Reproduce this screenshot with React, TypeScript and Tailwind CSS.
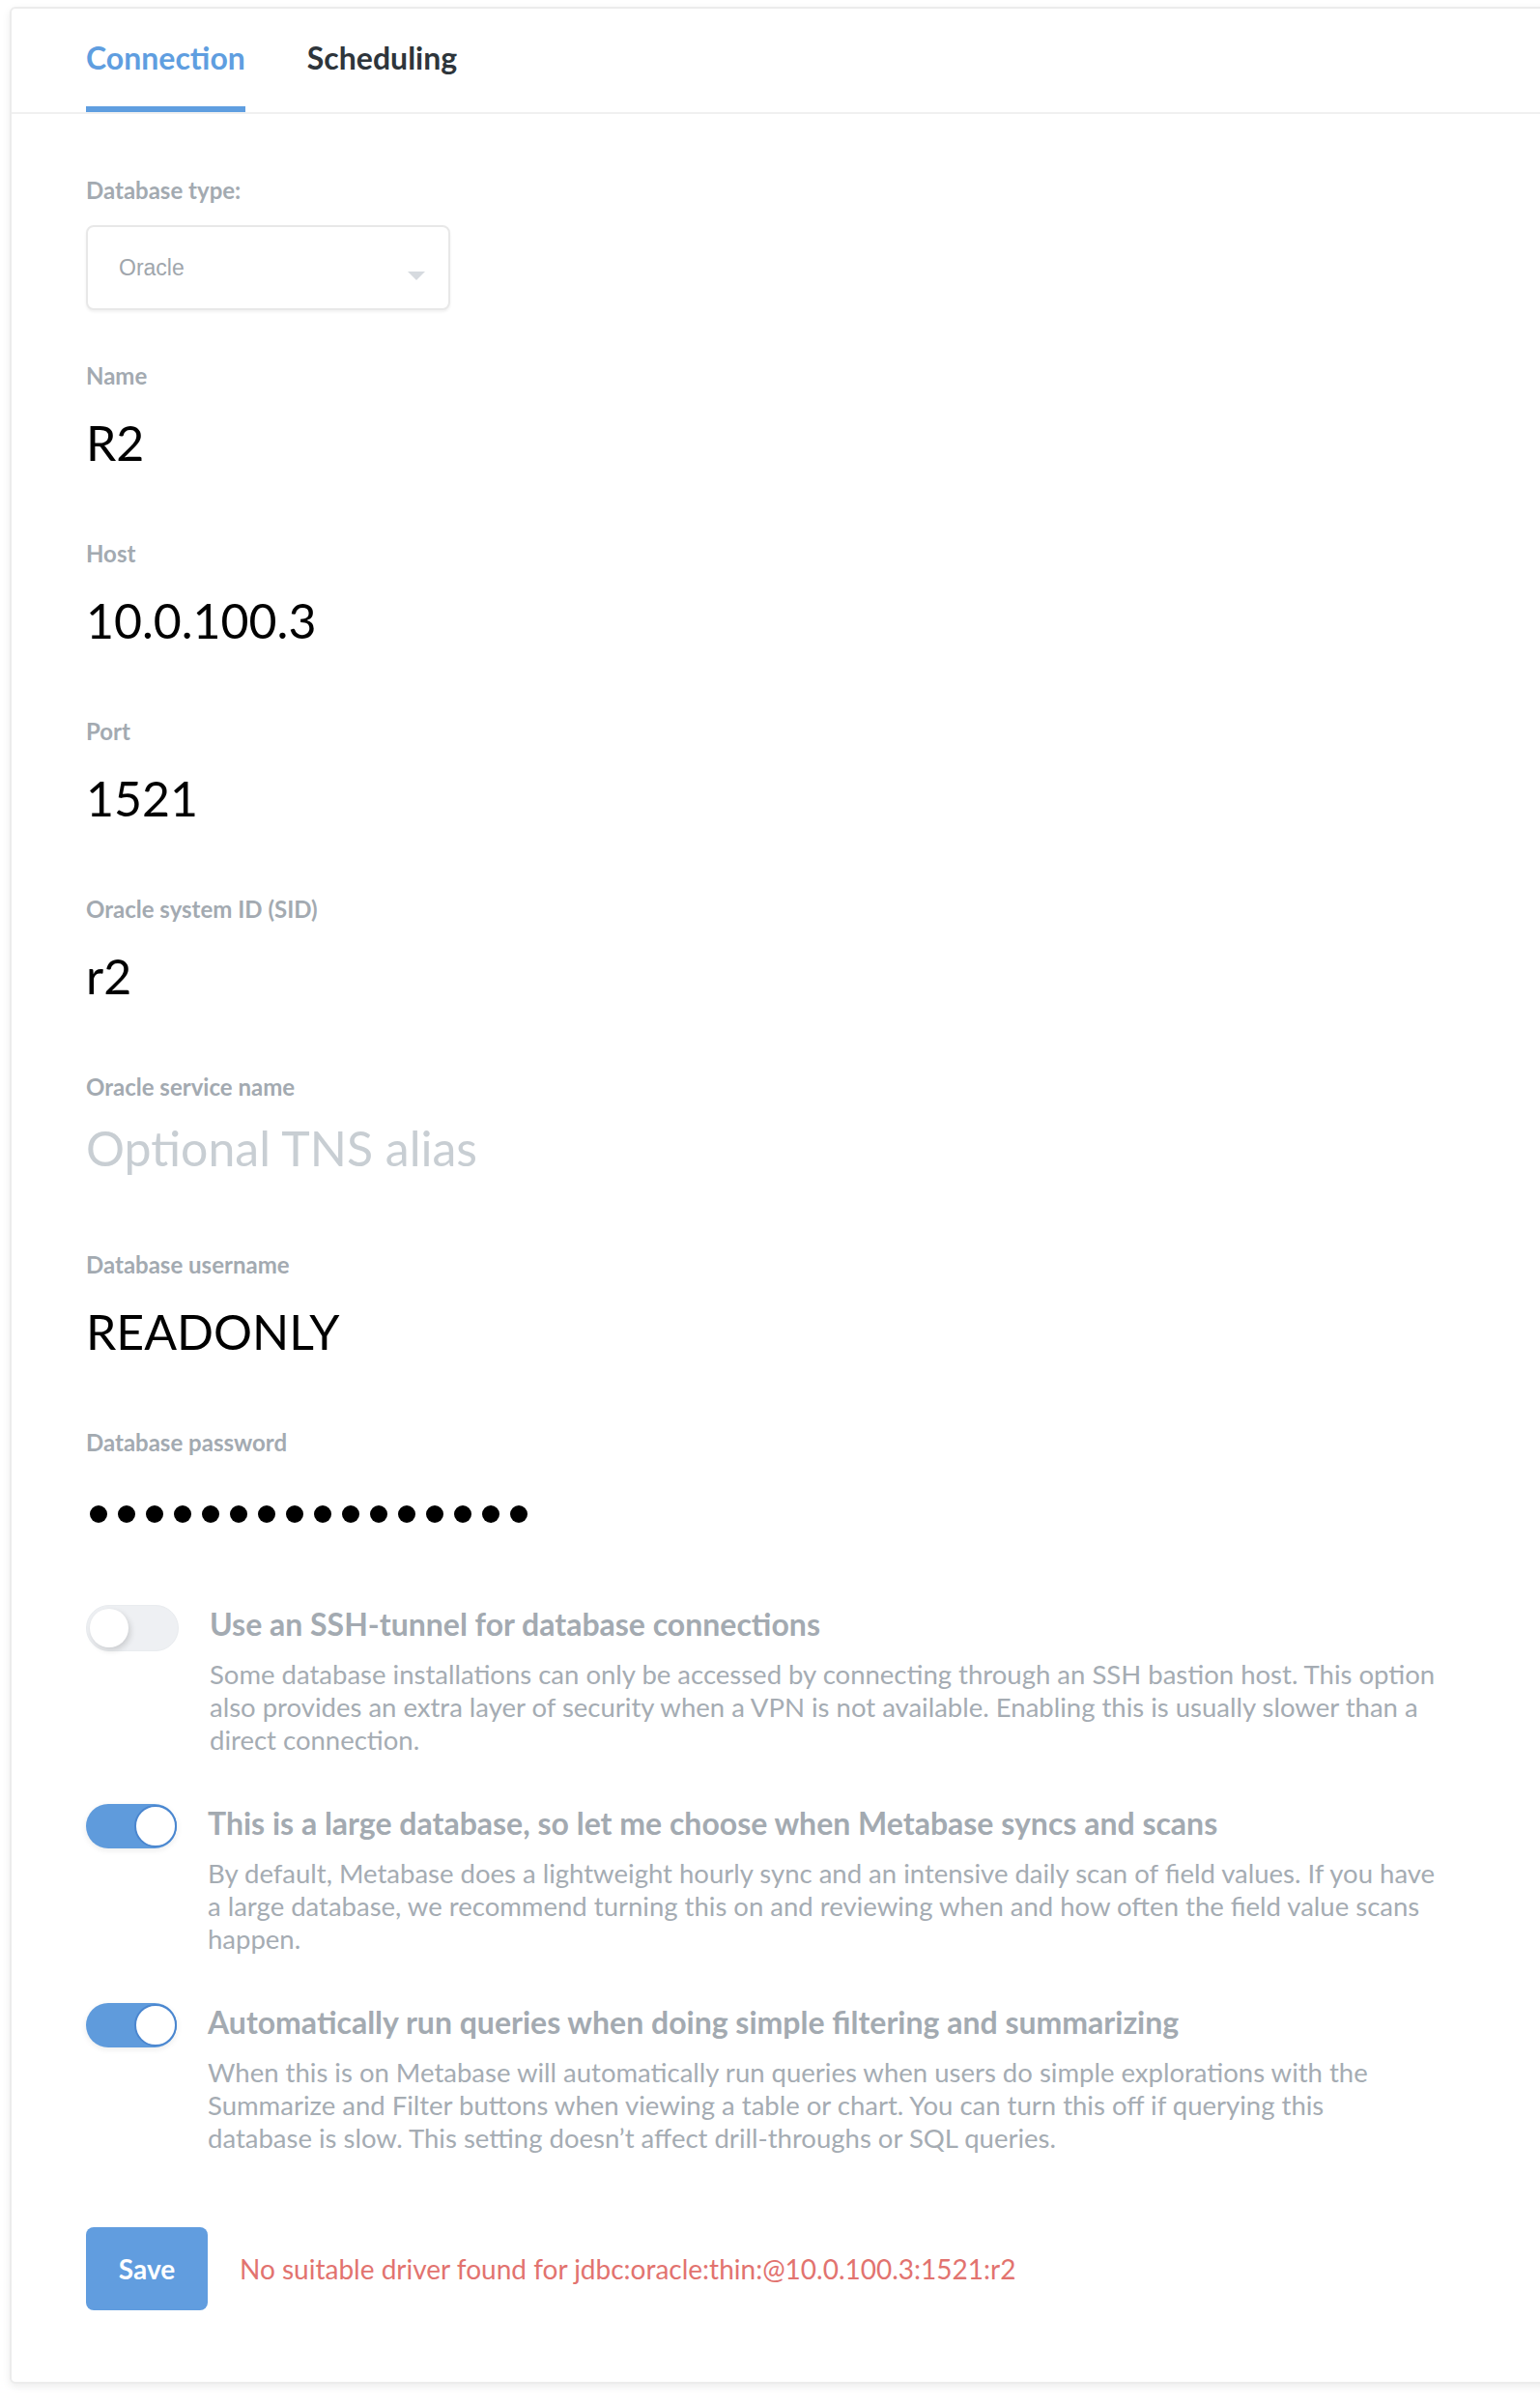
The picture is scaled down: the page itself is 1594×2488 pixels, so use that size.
import React from "react";

const fields: { label: string; value: string; placeholder?: boolean }[] = [
  { label: "Name", value: "R2" },
  { label: "Host", value: "10.0.100.3" },
  { label: "Port", value: "1521" },
  { label: "Oracle system ID (SID)", value: "r2" },
  { label: "Oracle service name", value: "Optional TNS alias", placeholder: true },
  { label: "Database username", value: "READONLY" },
];

const toggles = [
  {
    on: false,
    title: "Use an SSH-tunnel for database connections",
    lines: [
      "Some database installations can only be accessed by connecting through an SSH bastion host. This option",
      "also provides an extra layer of security when a VPN is not available. Enabling this is usually slower than a",
      "direct connection.",
    ],
  },
  {
    on: true,
    title: "This is a large database, so let me choose when Metabase syncs and scans",
    lines: [
      "By default, Metabase does a lightweight hourly sync and an intensive daily scan of field values. If you have",
      "a large database, we recommend turning this on and reviewing when and how often the field value scans",
      "happen.",
    ],
  },
  {
    on: true,
    title: "Automatically run queries when doing simple filtering and summarizing",
    lines: [
      "When this is on Metabase will automatically run queries when users do simple explorations with the",
      "Summarize and Filter buttons when viewing a table or chart. You can turn this off if querying this",
      "database is slow. This setting doesn\u2019t affect drill-throughs or SQL queries.",
    ],
  },
];

export default function App() {
  return (
    <div className="min-h-screen w-full overflow-hidden bg-white font-['Lato',sans-serif]">
      <div className="pl-[10px] pt-[7px]">
        <div className="-mr-[40px] rounded-[6px] border-2 border-[#ececec] bg-white shadow-[0_3px_8px_rgba(0,0,0,0.08)]">
          {/* Tabs */}
          <div className="flex border-b-2 border-[#f0f0f0] pl-[77px]">
            <div className="mr-[64px] border-b-[6px] border-[#5f9ee0] pb-[30px] pt-[31px] text-[32px] font-bold leading-[40px] text-[#5f9ee0]">Connection</div>
            <div className="border-b-[6px] border-transparent pb-[30px] pt-[31px] text-[32px] font-bold leading-[40px] text-[#2e353b]">Scheduling</div>
          </div>

          <div className="pb-[74px] pl-[77px] pt-[63px]">
            {/* Database type */}
            <div className="text-[24px] font-bold leading-[32px] text-[#a3aab1]">Database type:</div>
            <div className="mt-[20px] flex h-[88px] w-[377px] items-center justify-between rounded-[8px] border-2 border-[#e8e8e8] bg-white pl-[32px] pr-[24px] shadow-[0_2px_3px_rgba(0,0,0,0.06)]">
              <span className="font-['Liberation_Sans',sans-serif] text-[23px] text-[#a0a6ac]">Oracle</span>
              <svg width="18" height="10" viewBox="0 0 18 10" className="mt-[18px]">
                <path d="M0 0 L18 0 L9 9 Z" fill="#d6dadf" />
              </svg>
            </div>

            {/* Text fields */}
            <div className="mt-[52px]">
              {fields.map((f) => (
                <div key={f.label} className={f.placeholder ? "mb-[77px]" : "mb-[71px]"}>
                  <div className="text-[24px] font-bold leading-[32px] text-[#a3aab1]">{f.label}</div>
                  <div className={`text-[50px] leading-[56px] ${f.placeholder ? "mt-[19px] text-[#c8ced3]" : "mt-[25px] text-black"}`}>{f.value}</div>
                </div>
              ))}
              <div className="mb-[71px]">
                <div className="text-[24px] font-bold leading-[32px] text-[#a3aab1]">Database password</div>
                <div className="mt-[25px] flex h-[56px] items-center gap-[11px] pl-[4px] pt-[9px]">
                  {Array.from({ length: 16 }).map((_, i) => (
                    <span key={i} className="block h-[18px] w-[18px] rounded-full bg-black" />
                  ))}
                </div>
              </div>
            </div>

            {/* Toggles */}
            <div className="flex flex-col gap-[49px]">
              {toggles.map((t) => (
                <div key={t.title} className="flex">
                  {t.on ? (
                    <div className="relative h-[46px] w-[94px] shrink-0 rounded-full bg-[#5f9bdc] shadow-[0_2px_6px_rgba(0,0,0,0.08)]">
                      <span className="absolute right-0 top-[1px] h-[44px] w-[44px] rounded-full border-2 border-[#4a86cf] bg-white" />
                    </div>
                  ) : (
                    <div className="relative h-[48px] w-[96px] shrink-0 rounded-full border border-[#e9ecef] bg-[#eef0f3]">
                      <span className="absolute left-[3px] top-[3px] h-[40px] w-[40px] rounded-full bg-white shadow-[2px_3px_6px_rgba(0,0,0,0.15)]" />
                    </div>
                  )}
                  <div className="ml-[32px]">
                    <div className="text-[32px] font-bold leading-[40px] text-[#a3aab1]">{t.title}</div>
                    <div className="mt-[15px] text-[27.5px] leading-[34px] text-[#a5acb3]">
                      {t.lines.map((l) => (
                        <div key={l} className="whitespace-nowrap">{l}</div>
                      ))}
                    </div>
                  </div>
                </div>
              ))}
            </div>

            {/* Save */}
            <div className="mt-[75px] flex items-center">
              <button className="flex h-[86px] w-[126px] items-center justify-center rounded-[8px] bg-[#619ddf] text-[28px] font-bold text-white">Save</button>
              <span className="ml-[33px] text-[28px] text-[#e2736f]">No suitable driver found for jdbc:oracle:thin:@10.0.100.3:1521:r2</span>
            </div>
          </div>
        </div>
      </div>
    </div>
  );
}
